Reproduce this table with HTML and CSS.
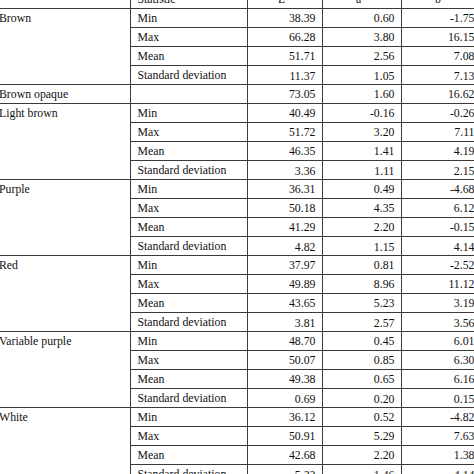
FILE: index.html
```html
<!DOCTYPE html>
<html>
<head>
<meta charset="utf-8">
<link rel="stylesheet" href="styles.css">
</head>
<body>
<table class="stats">
<colgroup>
<col class="c-group"><col class="c-stat"><col class="c-l"><col class="c-a"><col class="c-b">
</colgroup>
<thead>
<tr class="head"><th class="grp"></th><th class="stat">Statistic</th><th class="num">L*</th><th class="num">a*</th><th class="num">b*</th></tr>
</thead>
<tbody>
<tr><td class="grp" rowspan="4">Brown</td><td class="stat">Min</td><td class="num">38.39</td><td class="num">0.60</td><td class="num">-1.75</td></tr>
<tr><td class="stat">Max</td><td class="num">66.28</td><td class="num">3.80</td><td class="num">16.15</td></tr>
<tr><td class="stat">Mean</td><td class="num">51.71</td><td class="num">2.56</td><td class="num">7.08</td></tr>
<tr class="sd"><td class="stat">Standard deviation</td><td class="num">11.37</td><td class="num">1.05</td><td class="num">7.13</td></tr>
<tr><td class="grp">Brown opaque</td><td class="stat"></td><td class="num">73.05</td><td class="num">1.60</td><td class="num">16.62</td></tr>
<tr><td class="grp" rowspan="4">Light brown</td><td class="stat">Min</td><td class="num">40.49</td><td class="num">-0.16</td><td class="num">-0.26</td></tr>
<tr><td class="stat">Max</td><td class="num">51.72</td><td class="num">3.20</td><td class="num">7.11</td></tr>
<tr><td class="stat">Mean</td><td class="num">46.35</td><td class="num">1.41</td><td class="num">4.19</td></tr>
<tr class="sd"><td class="stat">Standard deviation</td><td class="num">3.36</td><td class="num">1.11</td><td class="num">2.15</td></tr>
<tr><td class="grp" rowspan="4">Purple</td><td class="stat">Min</td><td class="num">36.31</td><td class="num">0.49</td><td class="num">-4.68</td></tr>
<tr><td class="stat">Max</td><td class="num">50.18</td><td class="num">4.35</td><td class="num">6.12</td></tr>
<tr><td class="stat">Mean</td><td class="num">41.29</td><td class="num">2.20</td><td class="num">-0.15</td></tr>
<tr class="sd"><td class="stat">Standard deviation</td><td class="num">4.82</td><td class="num">1.15</td><td class="num">4.14</td></tr>
<tr><td class="grp" rowspan="4">Red</td><td class="stat">Min</td><td class="num">37.97</td><td class="num">0.81</td><td class="num">-2.52</td></tr>
<tr><td class="stat">Max</td><td class="num">49.89</td><td class="num">8.96</td><td class="num">11.12</td></tr>
<tr><td class="stat">Mean</td><td class="num">43.65</td><td class="num">5.23</td><td class="num">3.19</td></tr>
<tr class="sd"><td class="stat">Standard deviation</td><td class="num">3.81</td><td class="num">2.57</td><td class="num">3.56</td></tr>
<tr><td class="grp" rowspan="4">Variable purple</td><td class="stat">Min</td><td class="num">48.70</td><td class="num">0.45</td><td class="num">6.01</td></tr>
<tr><td class="stat">Max</td><td class="num">50.07</td><td class="num">0.85</td><td class="num">6.30</td></tr>
<tr><td class="stat">Mean</td><td class="num">49.38</td><td class="num">0.65</td><td class="num">6.16</td></tr>
<tr class="sd"><td class="stat">Standard deviation</td><td class="num">0.69</td><td class="num">0.20</td><td class="num">0.15</td></tr>
<tr><td class="grp" rowspan="4">White</td><td class="stat">Min</td><td class="num">36.12</td><td class="num">0.52</td><td class="num">-4.82</td></tr>
<tr><td class="stat">Max</td><td class="num">50.91</td><td class="num">5.29</td><td class="num">7.63</td></tr>
<tr><td class="stat">Mean</td><td class="num">42.68</td><td class="num">2.20</td><td class="num">1.38</td></tr>
<tr class="sd"><td class="stat">Standard deviation</td><td class="num">5.22</td><td class="num">1.46</td><td class="num">4.14</td></tr>
</tbody>
</table>
</body>
</html>
```
FILE: styles.css
```css
html, body {
  margin: 0;
  padding: 0;
  background: #ffffff;
  overflow: hidden;
}
body {
  width: 474px;
  height: 474px;
}
.stats {
  border-collapse: collapse;
  table-layout: fixed;
  width: 482px;
  margin-left: -1px;
  margin-top: -13px;
  font-family: "Liberation Serif", "Times New Roman", serif;
  font-size: 11.8px;
  color: #111111;
}
.c-group { width: 131px; }
.c-stat { width: 117px; }
.c-l { width: 75px; }
.c-a { width: 79px; }
.c-b { width: 80px; }
.stats th, .stats td {
  border: 1px solid #3a3a3a;
  padding: 0 7px;
  line-height: 18px;
  height: 18px;
  white-space: nowrap;
  overflow: hidden;
  font-weight: normal;
}
.stats td.grp, .stats th.grp {
  border-left: none;
  padding-left: 0;
  vertical-align: top;
  text-align: left;
}
.stats .stat { text-align: left; }
.stats .num { text-align: right; padding-right: 6px; }
.stats thead th {
  vertical-align: bottom;
  line-height: 13px;
  padding-bottom: 2px;
}
.stats thead th.num { text-align: center; padding-right: 7px; }
.stats tr.sd td.num {
  line-height: 16px;
  height: 16px;
  padding-top: 2px;
}
```
